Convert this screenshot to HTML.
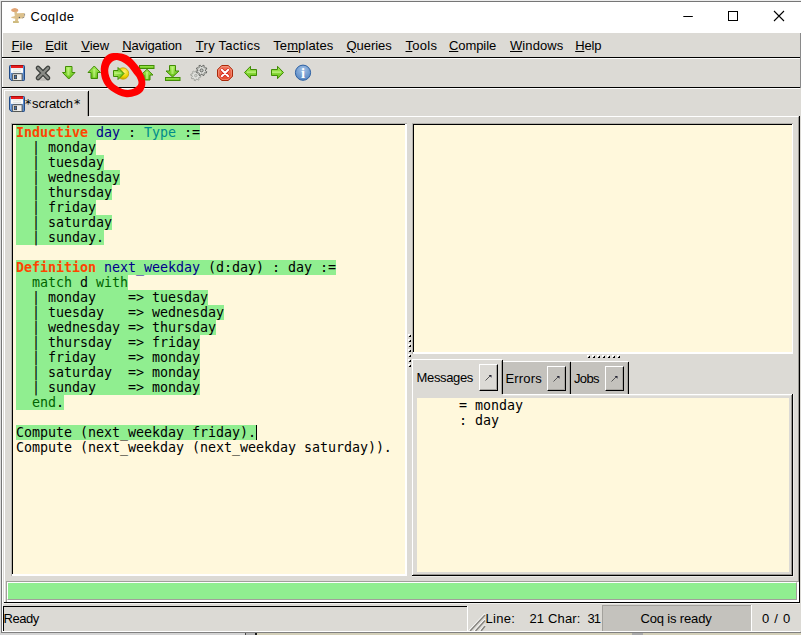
<!DOCTYPE html>
<html>
<head>
<meta charset="utf-8">
<title>CoqIde</title>
<style>
html,body{margin:0;padding:0;}
body{width:801px;height:635px;position:relative;overflow:hidden;background:#dcdad5;font-family:"Liberation Sans",sans-serif;font-size:13px;color:#000;}
.abs{position:absolute;}
#titlebar{left:0;top:0;width:801px;height:33px;background:#fff;}
#title{left:30.5px;top:9px;font-size:13px;letter-spacing:0.3px;line-height:16px;white-space:nowrap;}
.menu{top:38px;font-size:13px;line-height:16px;white-space:nowrap;}
.menu u{text-decoration:underline;text-underline-offset:1px;}
.hl{background:#fff;}
.dk{background:#000;}
pre{margin:0;letter-spacing:-0.027px;font-family:"DejaVu Sans Mono","Liberation Mono",monospace;font-size:13.333px;line-height:15px;}
#code{left:16px;top:125px;}
.gr{left:16px;height:15px;background:#90ee90;}
.kw{color:#ff4500;font-weight:bold;}
.id{color:#00008b;}
.ty{color:#008b8b;}
.k2{color:#006400;}
.cur{display:inline-block;width:1px;height:15px;background:#000;vertical-align:top;}
.btn{width:17px;height:23px;border-top:1px solid #fff;border-left:1px solid #fff;border-right:1px solid #000;border-bottom:1px solid #000;box-sizing:content-box;box-shadow:inset -1px -1px 0 #a7a5a0;}
.ui{white-space:nowrap;line-height:16px;}
</style>
</head>
<body>
<!-- title bar -->
<div class="abs" id="titlebar"></div>
<div class="abs" style="left:1px;top:1px;width:800px;height:1px;background:#767676"></div>
<div class="abs" style="left:2px;top:33px;width:1px;height:599px;background:#fff"></div>
<div class="abs" style="left:1px;top:1px;width:1px;height:631px;background:#767676"></div>
<div class="abs" style="left:0;top:0;width:1px;height:635px;background:#dcdcdc"></div>
<div class="abs" style="left:0;top:0;width:801px;height:1px;background:#ececec"></div>
<svg class="abs" style="left:8px;top:5px" width="22" height="22" viewBox="8 5 22 22">
  <path d="M14.200 11 L16.800 11 L17 13.300 L24 13 Q24.800 13 24.800 14 L24.600 17 Q23 18.800 21 18.500 L18.300 18.700 L18 21 L18.600 21.200 L18.600 23 L13 23 L13 21.200 L15 21 L15.300 18.800 Q12.500 18.700 11 17.600 L11.200 17 Q13.500 16.600 14.800 16 Z" fill="#dcc18d"/>
  <path d="M11.200 10.800 Q10.800 9 13 8.600 Q15 7.600 16.500 8.500 Q18.600 8.800 18.300 10.800 Q17.800 12 16.500 11.600 L14 11.900 Q11.800 12 11.200 10.800 Z" fill="#e0a474"/>
  <rect x="13" y="21.200" width="5.600" height="1.800" fill="#cdbb7e"/>
  <circle cx="19.400" cy="17.500" r="0.700" fill="#555a66"/>
  <path d="M24.600 13.800 V15.600 M22.300 18 L24.200 17.200" stroke="#7f8088" stroke-width="0.800" fill="none"/>
</svg>
<div class="abs ui" id="title">CoqIde</div>
<!-- window buttons -->
<svg class="abs" style="left:680px;top:8px" width="112" height="18" viewBox="0 0 112 18">
  <path d="M3.300 8.500 H12.800" stroke="#000" stroke-width="1" fill="none"/>
  <rect x="48.500" y="3.500" width="9" height="9" stroke="#000" stroke-width="1" fill="none"/>
  <path d="M94 3 L104 13 M104 3 L94 13" stroke="#000" stroke-width="1.1" fill="none"/>
</svg>

<!-- menu bar -->
<div class="abs" style="left:3px;top:33px;width:797px;height:24px;background:#dcdad5"></div>
<div class="abs" style="left:800px;top:33px;width:1px;height:55px;background:#8a8a8a"></div>
<div class="abs menu" style="left:11.5px;letter-spacing:0.07px"><u>F</u>ile</div>
<div class="abs menu" style="left:45.2px;letter-spacing:-0.07px"><u>E</u>dit</div>
<div class="abs menu" style="left:81.2px;letter-spacing:0px"><u>V</u>iew</div>
<div class="abs menu" style="left:122.2px;letter-spacing:-0.17px"><u>N</u>avigation</div>
<div class="abs menu" style="left:195.8px;letter-spacing:0.27px"><u>T</u>ry Tactics</div>
<div class="abs menu" style="left:273.2px;letter-spacing:0.1px">Te<u>m</u>plates</div>
<div class="abs menu" style="left:346.5px;letter-spacing:-0.05px"><u>Q</u>ueries</div>
<div class="abs menu" style="left:405.5px;letter-spacing:0.3px"><u>T</u>ools</div>
<div class="abs menu" style="left:449.0px;letter-spacing:-0.08px"><u>C</u>ompile</div>
<div class="abs menu" style="left:510.0px;letter-spacing:0.08px"><u>W</u>indows</div>
<div class="abs menu" style="left:575.2px;letter-spacing:-0.17px"><u>H</u>elp</div>
<div class="abs dk" style="left:2px;top:57px;width:798px;height:1px"></div>
<div class="abs hl" style="left:2px;top:58px;width:798px;height:1px"></div>
<div class="abs hl" style="left:2px;top:58px;width:1px;height:29px"></div>

<!-- toolbar -->
<svg class="abs" style="left:0;top:58px" width="330" height="30" viewBox="0 58 330 30">
<defs>
<linearGradient id="gg" x1="0" y1="0" x2="0" y2="1"><stop offset="0" stop-color="#a6ec5a"/><stop offset="1" stop-color="#66c214"/></linearGradient>
<linearGradient id="gh" x1="0" y1="0" x2="1" y2="0"><stop offset="0" stop-color="#a6ec5a"/><stop offset="1" stop-color="#66c214"/></linearGradient>
<radialGradient id="yb" cx="0.6" cy="0.35" r="0.7"><stop offset="0" stop-color="#fff27a"/><stop offset="0.6" stop-color="#edd400"/><stop offset="1" stop-color="#c4a000"/></radialGradient>
<radialGradient id="ib" cx="0.5" cy="0.3" r="0.8"><stop offset="0" stop-color="#a3c2e6"/><stop offset="1" stop-color="#4a7dbd"/></radialGradient>
<g id="floppy">
 <path d="M1.300 0.500 H14.700 Q15.500 0.500 15.500 1.300 V14.700 Q15.500 15.500 14.700 15.500 H2.300 L0.500 13.700 V1.300 Q0.500 0.500 1.300 0.500Z" fill="#5c8bc9" stroke="#204a87"/>
 <path d="M1.500 1.500 V13" stroke="#8db2e2" stroke-width="0.800" fill="none"/>
 <rect x="2" y="0" width="12" height="3.100" fill="#e81c1c"/>
 <rect x="2" y="0" width="12" height="0.900" fill="#a80808"/>
 <rect x="2" y="3.100" width="12" height="4.800" fill="#fbfbfa"/>
 <path d="M4 4.800H12M4 6.500H12" stroke="#d9dcd6" stroke-width="0.700"/>
 <rect x="3.700" y="8.700" width="9.400" height="6.800" rx="0.600" fill="#efefed" stroke="#555753"/>
 <rect x="5.400" y="10.300" width="2.200" height="3.400" fill="#4476b8" stroke="#3b3d3a" stroke-width="0.800"/>
</g>
</defs>
<use href="#floppy" x="9" y="65"/>
<!-- close X -->
<ellipse cx="43" cy="79.500" rx="6" ry="1.500" fill="#000" opacity="0.120"/>
<path d="M38 68 L48 78 M48 68 L38 78" stroke="#3d403d" stroke-width="4.600" stroke-linecap="round"/>
<path d="M38 68 L48 78 M48 68 L38 78" stroke="#8a8c87" stroke-width="2.300" stroke-linecap="round"/>
<!-- down arrow -->
<path d="M65.500 66.500 H72 V72.500 H75 L68.750 79 L62.500 72.500 H65.500 Z" fill="url(#gg)" stroke="#418c05" stroke-linejoin="round"/>
<!-- up arrow -->
<path d="M91 78.500 H97.500 V72.500 H100.500 L94.250 66 L88 72.500 H91 Z" fill="url(#gg)" stroke="#418c05" stroke-linejoin="round"/>
<!-- goto: ball + right arrow -->
<circle cx="123" cy="73.500" r="5.700" fill="url(#yb)" stroke="#c4a000" stroke-width="0.800"/>
<path d="M113.500 70.500 H118 V67.500 L124 73.500 L118 79.500 V76.500 H113.500 Z" fill="url(#gh)" stroke="#418c05" stroke-linejoin="round"/>
<!-- goto top -->
<rect x="139.500" y="65.500" width="14.500" height="3" fill="url(#gg)" stroke="#418c05"/>
<path d="M144 80 H150 V75 H153 L147 69.300 L141 75 H144 Z" fill="url(#gg)" stroke="#418c05" stroke-linejoin="round"/>
<!-- goto bottom -->
<path d="M169.500 65.500 H175.500 V71 H179 L172.500 77 L166 71 H169.500 Z" fill="url(#gg)" stroke="#418c05" stroke-linejoin="round"/>
<rect x="165.500" y="77.500" width="14.500" height="3" fill="url(#gg)" stroke="#418c05"/>
<!-- gears -->
<g stroke-width="0.900" stroke-linejoin="round">
 <path d="M199.50 75.47 L200.89 75.94 L200.62 77.27 L199.15 77.16 L198.51 78.12 L199.16 79.44 L198.03 80.19 L197.07 79.08 L195.93 79.30 L195.46 80.69 L194.13 80.42 L194.24 78.95 L193.28 78.31 L191.96 78.96 L191.21 77.83 L192.32 76.87 L192.10 75.73 L190.71 75.26 L190.98 73.93 L192.45 74.04 L193.09 73.08 L192.44 71.76 L193.57 71.01 L194.53 72.12 L195.67 71.90 L196.14 70.51 L197.47 70.78 L197.36 72.25 L198.32 72.89 L199.64 72.24 L200.39 73.37 L199.28 74.33Z" fill="#e3e4e0" stroke="#9c9e99"/>
 <circle cx="195.800" cy="75.600" r="1.300" fill="#cfd0cc" stroke="#a6a8a3"/>
 <path d="M205.45 71.01 L206.82 71.78 L206.27 73.11 L204.76 72.69 L203.89 73.56 L204.31 75.07 L202.98 75.62 L202.21 74.25 L200.99 74.25 L200.22 75.62 L198.89 75.07 L199.31 73.56 L198.44 72.69 L196.93 73.11 L196.38 71.78 L197.75 71.01 L197.75 69.79 L196.38 69.02 L196.93 67.69 L198.44 68.11 L199.31 67.24 L198.89 65.73 L200.22 65.18 L200.99 66.55 L202.21 66.55 L202.98 65.18 L204.31 65.73 L203.89 67.24 L204.76 68.11 L206.27 67.69 L206.82 69.02 L205.45 69.79Z" fill="#dcddd9" stroke="#5e605c"/>
 <circle cx="201.600" cy="70.400" r="1.500" fill="#c4c6c2" stroke="#5e605c"/>
</g>
<!-- stop -->
<defs><linearGradient id="sg" x1="0" y1="0" x2="0" y2="1"><stop offset="0" stop-color="#f07a62"/><stop offset="1" stop-color="#e54527"/></linearGradient></defs>
<path d="M221.700 65.500 H228.300 L232.500 69.700 V76.300 L228.300 80.500 H221.700 L217.500 76.300 V69.700 Z" fill="url(#sg)" stroke="#a9290b" stroke-linejoin="round"/>
<path d="M222.100 66.600 H227.900 L231.400 70.100 V75.900 L227.900 79.400 H222.100 L218.600 75.900 V70.100 Z" fill="none" stroke="#f6a08c" stroke-width="0.800" opacity="0.800"/>
<path d="M222 70 L228 76 M228 70 L222 76" stroke="#d21c14" stroke-width="3.400" stroke-linecap="round"/>
<path d="M221.800 69.800 L228.200 76.200 M228.200 69.800 L221.800 76.200" stroke="#fff" stroke-width="2" stroke-linecap="round"/>
<!-- left arrow -->
<path d="M256.500 69.500 V75.500 H250.500 V78.700 L244.500 72.500 L250.500 66.300 V69.500 Z" fill="url(#gg)" stroke="#418c05" stroke-linejoin="round"/>
<!-- right arrow -->
<path d="M271.500 69.500 V75.500 H277.500 V78.700 L283.500 72.500 L277.500 66.300 V69.500 Z" fill="url(#gg)" stroke="#418c05" stroke-linejoin="round"/>
<g fill="#d8ffa0" opacity="0.550">
<rect x="67.300" y="67.500" width="2.200" height="8"/>
<rect x="93.200" y="69" width="2.200" height="8.500"/>
<rect x="145.900" y="72" width="2.200" height="7"/>
<rect x="171.400" y="66.500" width="2.200" height="7.500"/>
<rect x="247" y="71.300" width="9" height="1.800"/>
<rect x="272" y="71.300" width="9" height="1.800"/>
<rect x="114.500" y="72.300" width="7" height="1.800"/>
</g>
<!-- info -->
<circle cx="303" cy="72.700" r="7.600" fill="url(#ib)" stroke="#2f62a3" stroke-width="1"/>
<text x="303" y="78" text-anchor="middle" font-family="Liberation Serif,serif" font-weight="bold" font-size="14.500" fill="#fff">i</text>
</svg>

<div class="abs dk" style="left:2px;top:87px;width:798px;height:1px"></div>
<div class="abs hl" style="left:2px;top:88px;width:798px;height:1px"></div>

<!-- main notebook tab -->
<div class="abs hl" style="left:4px;top:90px;width:84px;height:1px"></div>
<div class="abs hl" style="left:4px;top:90px;width:1px;height:512px"></div>
<div class="abs" style="left:87px;top:92px;width:1px;height:24px;background:#a7a5a0"></div>
<div class="abs dk" style="left:88px;top:91px;width:1px;height:25px"></div>
<div class="abs hl" style="left:89px;top:116px;width:709px;height:1px"></div>
<svg class="abs" style="left:9px;top:96px" width="16" height="16" viewBox="0 0 16 16"><use href="#floppy"/></svg>
<div class="abs ui" style="left:25px;top:96px;font-family:'DejaVu Sans','Liberation Sans',sans-serif;font-size:12.5px">*</div>
<div class="abs ui" style="left:32.100px;top:96px;letter-spacing:-0.15px">scratch</div>
<div class="abs ui" style="left:74px;top:96px;font-family:'DejaVu Sans','Liberation Sans',sans-serif;font-size:12.5px">*</div>

<svg class="abs" style="left:95px;top:45px" width="60" height="60" viewBox="95 45 60 60">
<path fill-rule="evenodd" fill="#ff0000" d="M115.3 53.0 C117.8 53.0 120.9 53.3 123.4 54.0 C125.8 54.7 127.9 55.8 130.0 57.3 C132.0 58.8 134.1 61.2 135.6 63.0 C137.2 64.7 138.3 66.1 139.4 67.7 C140.5 69.3 141.4 70.7 142.3 72.4 C143.1 74.1 144.1 76.0 144.6 78.1 C145.1 80.1 145.5 82.6 145.3 84.7 C145.0 86.7 144.3 88.7 143.2 90.4 C142.1 92.0 140.4 93.6 138.5 94.6 C136.6 95.7 134.1 96.4 131.9 96.8 C129.7 97.2 127.5 97.3 125.2 97.0 C123.0 96.7 120.8 96.0 118.6 95.1 C116.4 94.1 114.1 92.7 112.0 91.3 C110.0 89.9 107.9 88.5 106.3 86.6 C104.8 84.7 103.5 82.3 102.6 80.0 C101.6 77.6 101.1 74.8 100.9 72.4 C100.6 70.0 100.7 68.0 101.1 65.8 C101.6 63.6 102.3 61.1 103.5 59.2 C104.7 57.3 106.3 55.5 108.2 54.5 C110.2 53.4 112.8 53.1 115.3 53.0Z M116.7 60.1 C118.4 60.2 120.7 61.1 122.4 62.0 C124.1 62.9 125.7 64.1 127.1 65.3 C128.6 66.6 129.8 68.2 130.9 69.6 C132.0 70.9 132.8 72.1 133.8 73.4 C134.7 74.6 135.8 75.7 136.6 77.1 C137.4 78.6 138.3 80.4 138.5 81.9 C138.6 83.3 138.3 84.5 137.5 85.6 C136.7 86.7 135.3 87.8 133.8 88.5 C132.2 89.2 130.0 89.8 128.1 89.9 C126.2 90.0 124.3 89.6 122.4 89.0 C120.5 88.3 118.5 87.3 116.7 86.1 C115.0 84.9 113.3 83.5 112.0 81.9 C110.8 80.2 109.8 78.1 109.2 76.2 C108.5 74.3 108.2 72.4 108.2 70.5 C108.3 68.6 108.9 66.3 109.7 64.8 C110.4 63.4 111.3 62.3 112.5 61.5 C113.7 60.8 115.1 60.0 116.7 60.1Z"/>
</svg>
<!-- left text area -->
<div class="abs" style="left:11px;top:123px;width:396px;height:453px;background:#fff;border-top:1px solid #b4b2ad;border-left:1px solid #b4b2ad;box-sizing:border-box"></div>
<div class="abs" style="left:12px;top:124px;width:393px;height:450px;background:#fff8dc;border-top:1px solid #000;border-left:1px solid #000;box-sizing:border-box"></div>
<div class="abs gr" style="top:125px;width:184px"></div>
<div class="abs gr" style="top:140px;width:80px"></div>
<div class="abs gr" style="top:155px;width:88px"></div>
<div class="abs gr" style="top:170px;width:104px"></div>
<div class="abs gr" style="top:185px;width:96px"></div>
<div class="abs gr" style="top:200px;width:80px"></div>
<div class="abs gr" style="top:215px;width:96px"></div>
<div class="abs gr" style="top:230px;width:88px"></div>
<div class="abs gr" style="top:260px;width:320px"></div>
<div class="abs gr" style="top:275px;width:112px"></div>
<div class="abs gr" style="top:290px;width:192px"></div>
<div class="abs gr" style="top:305px;width:208px"></div>
<div class="abs gr" style="top:320px;width:200px"></div>
<div class="abs gr" style="top:335px;width:184px"></div>
<div class="abs gr" style="top:350px;width:184px"></div>
<div class="abs gr" style="top:365px;width:184px"></div>
<div class="abs gr" style="top:380px;width:184px"></div>
<div class="abs gr" style="top:395px;width:48px"></div>
<div class="abs gr" style="top:425px;width:240px"></div>
<pre class="abs" id="code"><span class="kw">Inductive</span> <span class="id">day</span> : <span class="ty">Type</span> :=
  | monday
  | tuesday
  | wednesday
  | thursday
  | friday
  | saturday
  | sunday.

<span class="kw">Definition</span> <span class="id">next_weekday</span> (d:day) : day :=
  <span class="k2">match</span> d <span class="k2">with</span>
  | monday    =&gt; tuesday
  | tuesday   =&gt; wednesday
  | wednesday =&gt; thursday
  | thursday  =&gt; friday
  | friday    =&gt; monday
  | saturday  =&gt; monday
  | sunday    =&gt; monday
  <span class="k2">end</span>.

Compute (next_weekday friday).<span class="cur"></span>
Compute (next_weekday (next_weekday saturday)).</pre>

<!-- right top area -->
<div class="abs" style="left:412px;top:123px;width:381px;height:231px;background:#fff;border-top:1px solid #b4b2ad;border-left:1px solid #b4b2ad;box-sizing:border-box"></div>
<div class="abs" style="left:413px;top:124px;width:379px;height:228px;background:#fff8dc;border-top:1px solid #000;border-left:1px solid #000;box-sizing:border-box"></div>

<!-- paned handles -->
<svg class="abs" style="left:408px;top:333px" width="4" height="36" viewBox="0 0 4 36" shape-rendering="crispEdges"><path d="M0 1h2v1h-1v1h-1z" fill="#fff"/><path d="M2 2h1v2h-2v-1h1z" fill="#000"/><path d="M0 6h2v1h-1v1h-1z" fill="#fff"/><path d="M2 7h1v2h-2v-1h1z" fill="#000"/><path d="M0 11h2v1h-1v1h-1z" fill="#fff"/><path d="M2 12h1v2h-2v-1h1z" fill="#000"/><path d="M0 16h2v1h-1v1h-1z" fill="#fff"/><path d="M2 17h1v2h-2v-1h1z" fill="#000"/><path d="M0 21h2v1h-1v1h-1z" fill="#fff"/><path d="M2 22h1v2h-2v-1h1z" fill="#000"/><path d="M0 26h2v1h-1v1h-1z" fill="#fff"/><path d="M2 27h1v2h-2v-1h1z" fill="#000"/><path d="M0 31h2v1h-1v1h-1z" fill="#fff"/><path d="M2 32h1v2h-2v-1h1z" fill="#000"/></svg>
<svg class="abs" style="left:586px;top:355px" width="36" height="4" viewBox="0 0 36 4" shape-rendering="crispEdges"><path d="M1 0h2v1h-1v1h-1z" fill="#fff"/><path d="M3 1h1v2h-2v-1h1z" fill="#000"/><path d="M6 0h2v1h-1v1h-1z" fill="#fff"/><path d="M8 1h1v2h-2v-1h1z" fill="#000"/><path d="M11 0h2v1h-1v1h-1z" fill="#fff"/><path d="M13 1h1v2h-2v-1h1z" fill="#000"/><path d="M16 0h2v1h-1v1h-1z" fill="#fff"/><path d="M18 1h1v2h-2v-1h1z" fill="#000"/><path d="M21 0h2v1h-1v1h-1z" fill="#fff"/><path d="M23 1h1v2h-2v-1h1z" fill="#000"/><path d="M26 0h2v1h-1v1h-1z" fill="#fff"/><path d="M28 1h1v2h-2v-1h1z" fill="#000"/><path d="M31 0h2v1h-1v1h-1z" fill="#fff"/><path d="M33 1h1v2h-2v-1h1z" fill="#000"/></svg>

<!-- messages notebook -->
<div class="abs hl" style="left:412px;top:359px;width:90px;height:1px"></div>
<div class="abs hl" style="left:412px;top:359px;width:1px;height:216px"></div>
<div class="abs" style="left:501px;top:361px;width:1px;height:33px;background:#a7a5a0"></div>
<div class="abs dk" style="left:502px;top:360px;width:1px;height:34px"></div>
<div class="abs" style="left:503px;top:362px;width:67px;height:32px;background:#c4c2bd"></div>
<div class="abs hl" style="left:503px;top:361px;width:67px;height:1px"></div>
<div class="abs" style="left:569px;top:363px;width:1px;height:31px;background:#a7a5a0"></div>
<div class="abs dk" style="left:570px;top:362px;width:1px;height:32px"></div>
<div class="abs" style="left:571px;top:362px;width:57px;height:32px;background:#c4c2bd"></div>
<div class="abs hl" style="left:571px;top:361px;width:57px;height:1px"></div>
<div class="abs" style="left:627px;top:363px;width:1px;height:31px;background:#a7a5a0"></div>
<div class="abs dk" style="left:628px;top:362px;width:1px;height:32px"></div>
<div class="abs hl" style="left:503px;top:394px;width:289px;height:1px"></div>
<div class="abs" style="left:503px;top:395px;width:289px;height:1px;background:#e6e5e1"></div>
<div class="abs" style="left:791px;top:395px;width:1px;height:180px;background:#9a9893"></div>
<div class="abs" style="left:413px;top:574px;width:379px;height:1px;background:#9a9893"></div>
<div class="abs" style="left:793px;top:394px;width:1px;height:183px;background:#eceBe7"></div>
<div class="abs" style="left:412px;top:576px;width:382px;height:1px;background:#ecebe7"></div>
<div class="abs dk" style="left:792px;top:394px;width:1px;height:182px"></div>
<div class="abs dk" style="left:412px;top:575px;width:381px;height:1px"></div>
<div class="abs ui" style="left:416.6px;top:370px;letter-spacing:-0.37px">Messages</div>
<div class="abs ui" style="left:505.4px;top:371px;letter-spacing:0.2px">Errors</div>
<div class="abs ui" style="left:574px;top:371px;letter-spacing:-0.67px">Jobs</div>
<div class="abs btn" style="left:479px;top:364px;height:25px"></div>
<div class="abs btn" style="left:547px;top:366px"></div>
<div class="abs btn" style="left:605px;top:366px"></div>
<svg class="abs" style="left:479px;top:364px" width="150" height="28" viewBox="479 364 150 28">
<g id="arw"><path d="M485.500 380.500 L490.500 375.500" stroke="#555" stroke-width="1"/><path d="M488.700 375 H491.500 V377.800 Z" fill="#223"/></g>
<use href="#arw" x="68" y="1"/>
<use href="#arw" x="126" y="1"/>
</svg>
<div class="abs" style="left:417px;top:398px;width:372px;height:174px;background:#fff8dc"></div>
<pre class="abs" style="left:419px;top:398px">     = monday
     : day</pre>

<!-- progress bar -->
<div class="abs" style="left:6px;top:581px;width:793px;height:21px;background:#fff;border-top:1px solid #a19f9a;border-left:1px solid #a19f9a;box-sizing:border-box"></div>
<div class="abs" style="left:7px;top:582px;width:790px;height:18px;background:#90ee90;border-top:1px solid #fff;border-left:1px solid #fff;border-right:1px solid #a19f9a;border-bottom:1px solid #a19f9a;box-sizing:border-box"></div>
<div class="abs" style="left:2px;top:603px;width:798px;height:1px;background:#efeeeb"></div>
<div class="abs dk" style="left:4px;top:602px;width:796px;height:1px"></div>
<div class="abs" style="left:798px;top:117px;width:1px;height:464px;background:#9a9893"></div>
<div class="abs dk" style="left:799px;top:116px;width:1px;height:487px"></div>

<!-- status bar -->
<div class="abs dk" style="left:3px;top:606px;width:464px;height:1px"></div>
<div class="abs dk" style="left:3px;top:606px;width:1px;height:25px"></div>
<div class="abs hl" style="left:467px;top:606px;width:1px;height:25px"></div>
<div class="abs hl" style="left:3px;top:631px;width:797px;height:1px"></div>
<svg class="abs" style="left:466px;top:612px" width="20" height="19" viewBox="466 612 20 19"><path d="M468.8 631 L485 613.8" stroke="#fff" stroke-width="1.300"/><path d="M470.0 631 L485 615.0" stroke="#85837e" stroke-width="1.500"/><path d="M474.3 631 L485 619.3" stroke="#fff" stroke-width="1.300"/><path d="M475.5 631 L485 620.5" stroke="#85837e" stroke-width="1.500"/><path d="M479.8 631 L485 624.8" stroke="#fff" stroke-width="1.300"/><path d="M481.0 631 L485 626.0" stroke="#85837e" stroke-width="1.500"/></svg>
<div class="abs ui" style="left:3.5px;top:611px;letter-spacing:-0.43px">Ready</div>
<div class="abs ui" style="left:485.6px;top:611px;letter-spacing:0.25px">Line:</div>
<div class="abs ui" style="left:529.4px;top:611px;letter-spacing:0.17px">21 Char:</div>
<div class="abs ui" style="left:587.4px;top:611px;letter-spacing:-0.8px">31</div>
<div class="abs" style="left:602px;top:605px;width:149px;height:26px;background:#c4c2bd;border-top:1px solid #a3a19c;border-left:1px solid #a3a19c;box-sizing:border-box"></div>
<div class="abs hl" style="left:751px;top:605px;width:1px;height:27px"></div>
<div class="abs ui" style="left:640.4px;top:611px;letter-spacing:-0.15px">Coq is ready</div>
<div class="abs ui" style="left:762.1px;top:611px;word-spacing:1.4px">0 / 0</div>
<div class="abs" style="left:0;top:632px;width:801px;height:3px;background:#d3cfb8"></div>
<div class="abs" style="left:0;top:632px;width:245px;height:3px;background:#d4d4d4"></div>
<div class="abs" style="left:245px;top:633px;width:12px;height:2px;background:#b4b4b4;border-left:1px solid #484848;border-right:2px solid #1c1c1c;box-sizing:border-box"></div>
<div class="abs" style="left:632px;top:633px;width:11px;height:2px;background:#a9a9a9"></div>
<div class="abs" style="left:1px;top:632px;width:800px;height:1px;background:#808080"></div>
</body>
</html>
